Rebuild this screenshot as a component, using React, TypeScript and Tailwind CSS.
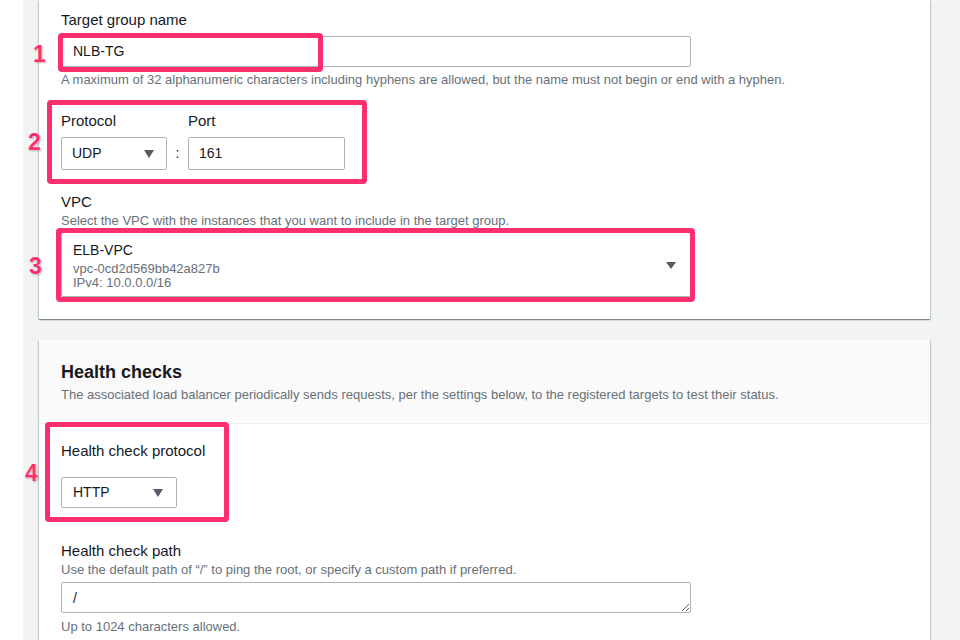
import React from "react";

const font = { fontFamily: '"Liberation Sans", Arial, sans-serif' };

function Caret({ w = 10, h = 8 }: { w?: number; h?: number }) {
  return (
    <svg width={w} height={h} viewBox={`0 0 ${w} ${h}`} className="shrink-0">
      <polygon points={`0,0 ${w},0 ${w / 2},${h}`} fill="#545b64" />
    </svg>
  );
}

function Mark({ n, className }: { n: string; className: string }) {
  return (
    <div
      className={`absolute text-[23px] font-bold leading-none text-[#fc2f6e] [text-shadow:0_0_1px_#fff,0_0_2px_#fff,1px_1px_2px_rgba(0,0,0,0.35)] ${className}`}
    >
      {n}
    </div>
  );
}

function Box({ className }: { className: string }) {
  return (
    <div
      className={`absolute border-[5px] border-[#fc2f6e] rounded-[4px] pointer-events-none ${className}`}
    />
  );
}

export default function App() {
  return (
    <div
      className="relative w-[960px] h-[640px] overflow-hidden flex bg-[#f2f3f3] text-[#16191f]"
      style={font}
    >
      <div className="w-[23px] shrink-0 bg-white" />
      <div className="flex-1 pl-[16px] pr-[30px] flex flex-col gap-[21px]">
        {/* Card 1 */}
        <div className="bg-white shadow-[0_1px_1px_0_rgba(0,28,36,0.3),1px_1px_1px_0_rgba(0,28,36,0.15),-1px_1px_1px_0_rgba(0,28,36,0.15)] pl-[22px] pt-[9px] pb-[22px]">
          <div className="text-[15px] leading-[22px]">Target group name</div>
          <div className="mt-[5px] w-[630px] h-[31px] border border-[#aab7b8] rounded-[2px] flex items-center px-[11px] text-[14px]">
            NLB-TG
          </div>
          <div className="mt-[4px] text-[13px] leading-[18px] text-[#687078]">
            A maximum of 32 alphanumeric characters including hyphens are allowed, but the name must not begin or end with a hyphen.
          </div>

          <div className="mt-[21px] flex items-end">
            <div className="flex flex-col">
              <div className="text-[15px] leading-[22px]">Protocol</div>
              <div className="mt-[5px] w-[106px] h-[33px] border border-[#aab7b8] rounded-[2px] flex items-center justify-between pl-[10px] pr-[12px] text-[14px]">
                <span>UDP</span>
                <Caret />
              </div>
            </div>
            <div className="w-[21px] h-[33px] flex items-center justify-center text-[14px]">:</div>
            <div className="flex flex-col">
              <div className="text-[15px] leading-[22px]">Port</div>
              <div className="mt-[5px] w-[157px] h-[33px] border border-[#aab7b8] rounded-[2px] flex items-center px-[10px] text-[14px]">
                161
              </div>
            </div>
          </div>

          <div className="mt-[21px] text-[15px] leading-[22px]">VPC</div>
          <div className="text-[13px] leading-[16px] text-[#687078]">
            Select the VPC with the instances that you want to include in the target group.
          </div>
          <div className="mt-[3px] w-[630px] border border-[#aab7b8] rounded-[2px] flex items-center justify-between pl-[11px] pr-[14px] pt-[7px] pb-[6px]">
            <div className="flex flex-col">
              <div className="text-[14px] leading-[20px]">ELB-VPC</div>
              <div className="mt-[2px] text-[13px] leading-[14px] text-[#687078]">vpc-0cd2d569bb42a827b</div>
              <div className="text-[13px] leading-[14px] text-[#687078]">IPv4: 10.0.0.0/16</div>
            </div>
            <Caret w={10} h={7} />
          </div>
        </div>

        {/* Card 2 */}
        <div className="flex-1 bg-white shadow-[0_1px_1px_0_rgba(0,28,36,0.3),1px_1px_1px_0_rgba(0,28,36,0.15),-1px_1px_1px_0_rgba(0,28,36,0.15)]">
          <div className="bg-[#fafafa] border-b border-[#eaeded] pl-[22px] pt-[20px] pb-[20px]">
            <div className="text-[18px] leading-[24px] font-bold">Health checks</div>
            <div className="mt-[3px] text-[13px] leading-[16px] text-[#687078]">
              The associated load balancer periodically sends requests, per the settings below, to the registered targets to test their status.
            </div>
          </div>
          <div className="pl-[22px] pt-[16px]">
            <div className="text-[15px] leading-[22px]">Health check protocol</div>
            <div className="mt-[15px] w-[116px] h-[31px] border border-[#aab7b8] rounded-[2px] flex items-center justify-between pl-[11px] pr-[13px] text-[14px]">
              <span>HTTP</span>
              <Caret />
            </div>

            <div className="mt-[32px] text-[15px] leading-[22px]">Health check path</div>
            <div className="text-[13px] leading-[16px] text-[#687078]">
              Use the default path of “/” to ping the root, or specify a custom path if preferred.
            </div>
            <textarea
              readOnly
              rows={1}
              defaultValue="/"
              className="mt-[4px] block w-[630px] h-[31px] border border-[#aab7b8] rounded-[2px] px-[11px] py-[5px] text-[14px] leading-[20px] text-[#16191f] resize outline-none"
              style={font}
            />
            <div className="mt-[6px] text-[13px] leading-[16px] text-[#687078]">Up to 1024 characters allowed.</div>
          </div>
        </div>
      </div>

      {/* Annotations */}
      <Box className="left-[58px] top-[33px] w-[265px] h-[39px]" />
      <Box className="left-[47px] top-[100px] w-[320px] h-[84px]" />
      <Box className="left-[56px] top-[228px] w-[639px] h-[74px]" />
      <Box className="left-[45px] top-[422px] w-[184px] h-[100px]" />
      <Mark n="1" className="left-[33px] top-[43px]" />
      <Mark n="2" className="left-[28px] top-[131px]" />
      <Mark n="3" className="left-[29px] top-[255px]" />
      <Mark n="4" className="left-[25px] top-[462px]" />
    </div>
  );
}
